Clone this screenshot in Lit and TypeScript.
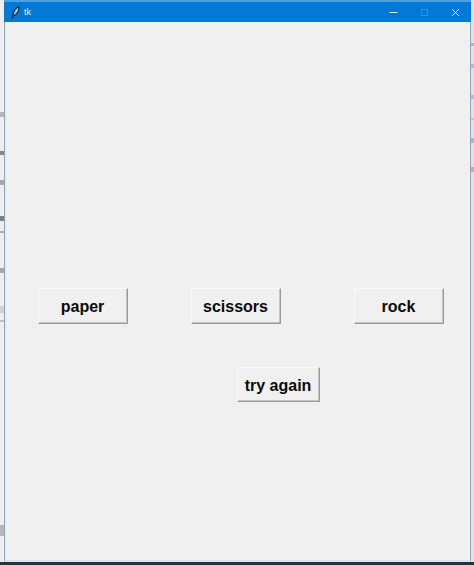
import { LitElement, html, css } from "lit";
import { customElement } from "lit/decorators.js";

const leftMarks = [
  { y: 112, h: 5, c: "#b4b8bc" }, { y: 151, h: 4, c: "#84898e" }, { y: 180, h: 5, c: "#a4a8ac" },
  { y: 216, h: 5, c: "#7b8086" }, { y: 231, h: 2, c: "#a4a8ac" }, { y: 268, h: 5, c: "#a4a8ac" },
  { y: 306, h: 7, c: "#cfd2d5" }, { y: 320, h: 2, c: "#bcc0c4" }, { y: 525, h: 11, c: "#b4b8bc" },
];
const rightMarks = [
  { y: 43, h: 3, c: "#9dbcdb" }, { y: 64, h: 4, c: "#a6c2dd" }, { y: 95, h: 4, c: "#a6c2dd" },
  { y: 118, h: 2, c: "#b5cbe0" }, { y: 138, h: 5, c: "#9dbcdb" }, { y: 167, h: 5, c: "#aab8c6" },
];

@customElement("app-root")
export class AppRoot extends LitElement {
  static styles = css`
    :host { display: block; width: 474px; height: 565px; overflow: hidden; background: #e4e7ea; font-family: "Liberation Sans", Arial, sans-serif; }
    .desk { display: flex; height: 562px; }
    .strip { position: relative; flex: none; }
    .strip.l { width: 4px; background: #eceef0; }
    .strip.r { width: 3px; background: #dde3e9; }
    .mark { position: absolute; left: 0; width: 100%; }
    .window { flex: 1; display: flex; flex-direction: column; min-width: 0; border: 1px solid #8fa8c0; border-top: 0; border-bottom: 2px solid #d3e6f4; box-shadow: inset 1px 0 0 #dcebf6; background: #f0f0f0; }
    .title { flex: none; height: 20px; margin: 0 -1px; padding-left: 6px; display: flex; align-items: center; background: #0078d7; border-top: 2px solid #4f9fe0; color: #e6f1fb; font: 9px "Liberation Sans", Arial, sans-serif; }
    .feather { width: 11px; height: 13px; margin-right: 3px; flex: none; }
    .name { flex: 1; }
    .ctl { width: 31px; height: 20px; display: flex; align-items: center; justify-content: center; }
    .ctl svg { width: 9px; height: 9px; display: block; }
    .client { flex: 1; display: flex; flex-direction: column; padding: 266px 0 0 33px; }
    .row { display: flex; }
    .row.top { height: 79px; }
    .row.top button + button { margin-left: 64px; }
    .row.top button:last-child { margin-left: 74px; }
    .row.bottom { padding-left: 199px; }
    button { box-sizing: border-box; width: 90px; height: 36px; padding: 2px 1px 0 0; background: #f0f0f0; color: #0a0a0a; font: bold 16px "Liberation Sans", Arial, sans-serif; border: 1px solid; border-color: #f9f9f9 #9a9a9a #9a9a9a #f9f9f9; box-shadow: inset -1px -1px 0 #c4c4c4; }
    .row.top button + button { margin-left: 63px; }
    .row.top button:last-child { margin-left: 73px; }
    .row.bottom button { width: 83px; height: 35px; }
    .ground { height: 3px; background: #2b3138; }
  `;

  render() {
    return html`
      <div class="desk">
        <div class="strip l">
          ${leftMarks.map((m) => html`<span class="mark" style="top:${m.y}px;height:${m.h}px;background:${m.c}"></span>`)}
        </div>
        <div class="window">
          <div class="title">
            <svg class="feather" viewBox="0 0 11 13"><path d="M9 0.5C5.5 2 3.2 6 2.6 10.5L1.8 12.8M9 0.5C9 4.5 6.8 8.8 2.6 10.5" fill="#c9d9ea" stroke="#14202e" stroke-width="1.1"/></svg>
            <span class="name">tk</span>
            <span class="ctl"><svg viewBox="0 0 9 9"><path d="M0.5 4.5H8.5" stroke="#e6f1fb" fill="none"/></svg></span>
            <span class="ctl"><svg viewBox="0 0 9 9"><rect x="1.5" y="1.5" width="6" height="6" stroke="#2f8edd" fill="none"/></svg></span>
            <span class="ctl"><svg viewBox="0 0 9 9"><path d="M1 1L8 8M8 1L1 8" stroke="#e6f1fb" fill="none"/></svg></span>
          </div>
          <div class="client">
            <div class="row top">
              <button>paper</button>
              <button>scissors</button>
              <button>rock</button>
            </div>
            <div class="row bottom"><button>try again</button></div>
          </div>
        </div>
        <div class="strip r">
          ${rightMarks.map((m) => html`<span class="mark" style="top:${m.y}px;height:${m.h}px;background:${m.c}"></span>`)}
        </div>
      </div>
      <div class="ground"></div>
    `;
  }
}
